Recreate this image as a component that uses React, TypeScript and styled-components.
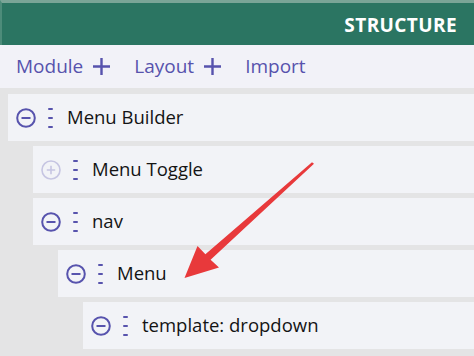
import React from "react";
import styled, { createGlobalStyle } from "styled-components";

const Global = createGlobalStyle`
  html, body { margin: 0; padding: 0; }
  body {
    width: 474px; height: 356px; overflow: hidden;
    background: #e4e4e5;
    font-family: "Open Sans", "Noto Sans", sans-serif;
  }
`;

const Frame = styled.div`
  position: relative;
  width: 474px;
  height: 356px;
  display: flex;
  flex-direction: column;
  background: #e4e4e5;
`;

const Header = styled.header`
  height: 42px;
  border-top: 3px solid #7aa597;
  border-left: 2px solid #4d8c7a;
  background: #2b7562;
  display: flex;
  align-items: center;
  justify-content: flex-end;
  padding-right: 17px;
  box-sizing: content-box;
`;

const Title = styled.h1`
  margin: 0;
  color: #ffffff;
  font-size: 19px;
  font-weight: 700;
  letter-spacing: 0.4px;
  font-family: "Open Sans", sans-serif;
  padding-top: 1px;
`;

const Toolbar = styled.nav`
  height: 43px;
  background: #f2f2f8;
  display: flex;
  align-items: center;
  padding-left: 16px;
  gap: 23px;
`;

const ToolButton = styled.span`
  display: flex;
  align-items: center;
  gap: 9px;
  color: #5753ad;
  font-size: 19px;
  line-height: 1;
`;

const Tree = styled.div`
  display: flex;
  flex-direction: column;
  gap: 5px;
  padding: 6px 0 0 8px;
`;

const Row = styled.div<{ $depth: number }>`
  margin-left: ${(p) => p.$depth * 25}px;
  height: 47px;
  background: #f2f3f7;
  display: flex;
  align-items: center;
  padding-left: 8px;
`;

const Handle = styled.span`
  display: flex;
  flex-direction: column;
  gap: 7px;
  margin-left: 12px;
  width: 5px;
  span {
    display: block;
    width: 5px;
    height: 2px;
    background: #5753ad;
    border-radius: 1px;
  }
`;

const Label = styled.span`
  margin-left: 14px;
  font-size: 18.5px;
  color: #141414;
  line-height: 1;
`;

const ArrowLayer = styled.svg`
  position: absolute;
  left: 0;
  top: 0;
  pointer-events: none;
`;

const Plus = () => (
  <svg width="19" height="19" viewBox="0 0 19 19">
    <path d="M9.5 1v17M1 9.5h17" stroke="#5753ad" strokeWidth="2.4" />
  </svg>
);

const Toggle = ({ open }: { open: boolean }) =>
  open ? (
    <svg width="20" height="20" viewBox="0 0 20 20">
      <circle cx="10" cy="10" r="8.8" fill="none" stroke="#5753ad" strokeWidth="2" />
      <path d="M5.5 10h9" stroke="#5753ad" strokeWidth="2" />
    </svg>
  ) : (
    <svg width="20" height="20" viewBox="0 0 20 20">
      <circle cx="10" cy="10" r="9" fill="none" stroke="#c6c5e2" strokeWidth="1.6" />
      <path d="M5.8 10h8.4M10 5.8v8.4" stroke="#c6c5e2" strokeWidth="1.6" />
    </svg>
  );

const items = [
  { label: "Menu Builder", depth: 0, open: true },
  { label: "Menu Toggle", depth: 1, open: false },
  { label: "nav", depth: 1, open: true },
  { label: "Menu", depth: 2, open: true },
  { label: "template: dropdown", depth: 3, open: true },
];

export default function App() {
  return (
    <>
      <Global />
      <Frame>
        <Header>
          <Title>STRUCTURE</Title>
        </Header>
        <Toolbar>
          <ToolButton>
            Module <Plus />
          </ToolButton>
          <ToolButton>
            Layout <Plus />
          </ToolButton>
          <ToolButton>Import</ToolButton>
        </Toolbar>
        <Tree>
          {items.map((it) => (
            <Row key={it.label} $depth={it.depth}>
              <Toggle open={it.open} />
              <Handle>
                <span />
                <span />
                <span />
              </Handle>
              <Label>{it.label}</Label>
            </Row>
          ))}
        </Tree>
        <ArrowLayer width="474" height="356" viewBox="0 0 474 356">
          <polygon
            points="314,163.8 210.6,259.8 219,267.5 184.5,278 197.5,246 205.4,254.2 312,162.2"
            fill="#e8393b"
            strokeLinejoin="round"
          />
        </ArrowLayer>
      </Frame>
    </>
  );
}
